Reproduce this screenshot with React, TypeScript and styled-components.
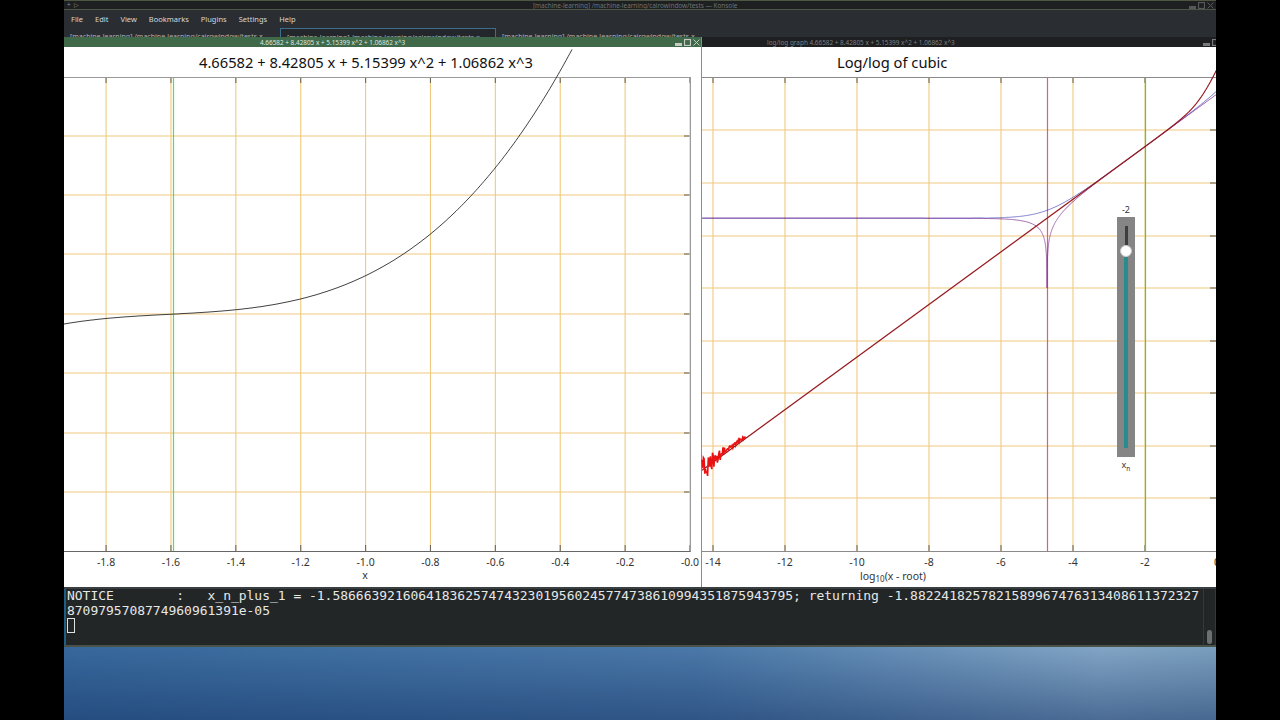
import React from "react";
import styled, { createGlobalStyle } from "styled-components";

const GlobalStyle = createGlobalStyle`
  html, body {
    margin: 0;
    padding: 0;
    background: #000;
    width: 1280px;
    height: 720px;
    overflow: hidden;
  }
`;

const GRID = "#f0ca7e";

const cubic = (x: number): number =>
  4.66582 + 8.42805 * x + 5.15399 * x * x + 1.06862 * x * x * x;

// left plot, in svg coords (svg starts at x=64, y=77)
const leftX = (x: number): number => 626 + x * 324.4;
const leftY = (v: number): number => 237 - v * 118.6;

const cubicPoints = (): string => {
  const pts: string[] = [];
  for (let px = 0; px < 520; px += 2) {
    const x = (px - 626) / 324.4;
    const y = leftY(cubic(x));
    if (y < -30) break;
    pts.push(`${px},${y.toFixed(1)}`);
  }
  return pts.join(" ");
};

// right plot, svg starts at x=702, y=77
const SLOPE = 0.145;
const QUAD = 0.0675;
const CUBE = 1.06862;
const C = 2.75e-6;
const logX = (u: number): number => 515 + u * 36;
const logY = (v: number): number => 72 - 77 - 26.3 * Math.log10(v);

const logPoints = (fn: (h: number) => number, maxY = 600): string => {
  const pts: string[] = [];
  for (let u = -14.3; u <= 0.02; u += 0.002) {
    const h = Math.pow(10, u);
    const y = Math.min(logY(Math.max(fn(h), 1e-30)), maxY);
    pts.push(`${logX(u).toFixed(2)},${y.toFixed(1)}`);
  }
  return pts.join(" ");
};

// rounding noise at the far left of the red curve
const noisePoints = (): string => {
  const pts: string[] = [];
  for (let px = 0; px < 44; px += 0.7) {
    const s = Math.sin(px * 127.1 + 3.7) * 43758.5453;
    const r = s - Math.floor(s) - 0.5;
    const amp = px < 12 ? 24 : px < 24 ? 12 : 4;
    const u = (px - 515) / 36;
    const base = logY(SLOPE * Math.pow(10, u));
    pts.push(`${px.toFixed(1)},${(base - 2 + r * amp).toFixed(1)}`);
  }
  return pts.join(" ");
};

const leftTicks = [-1.8, -1.6, -1.4, -1.2, -1.0, -0.8, -0.6, -0.4, -0.2, -0.0];
const leftRows = [59, 118, 177, 237, 296, 356, 415];
const rightTicks = [-14, -12, -10, -8, -6, -4, -2, 0];
const rightRows = [53, 106, 159, 211, 264, 316, 369, 421];

const menus = ["File", "Edit", "View", "Bookmarks", "Plugins", "Settings", "Help"];
const tabName = "[machine-learning] /machine-learning/cairowindow/tests";

function WinButtons({ color, offset = 0 }: { color: string; offset?: number }): JSX.Element {
  return (
    <ButtonRow $offset={offset}>
      <svg width="7" height="7" viewBox="0 0 7 7">
        <rect x="0" y="4" width="7" height="3" fill={color} />
      </svg>
      <svg width="7" height="7" viewBox="0 0 7 7">
        <rect x="0.5" y="0.5" width="6" height="6" fill="none" stroke={color} strokeWidth="1.2" />
      </svg>
      <svg width="7" height="7" viewBox="0 0 7 7">
        <path d="M0.5 0.5 L6.5 6.5 M6.5 0.5 L0.5 6.5" stroke={color} strokeWidth="1" />
      </svg>
    </ButtonRow>
  );
}

function LeftChart(): JSX.Element {
  return (
    <ChartSvg width="637" height="510" viewBox="0 0 637 510">
      {leftRows.map((y) => (
        <g key={y}>
          <line x1="0" x2="626" y1={y} y2={y} stroke={GRID} strokeWidth="1.1" />
          <line x1="620" x2="626" y1={y} y2={y} stroke="#6d675a" strokeWidth="1.1" />
        </g>
      ))}
      {leftTicks.map((t) => (
        <g key={t}>
          <line x1={leftX(t)} x2={leftX(t)} y1="0" y2="474" stroke={GRID} strokeWidth="1.1" />
          <line x1={leftX(t)} x2={leftX(t)} y1="0" y2="6" stroke="#6d675a" strokeWidth="1.1" />
          <line x1={leftX(t)} x2={leftX(t)} y1="468" y2="474" stroke="#6d675a" strokeWidth="1.1" />
          <TickLabel x={leftX(t)} y="489">
            {t.toFixed(1).replace(/^0\.0$/, "-0.0")}
          </TickLabel>
        </g>
      ))}
      <line x1="109.5" x2="109.5" y1="0" y2="474" stroke="#55dd55" strokeWidth="1.2" />
      <path d="M0 0.5 H626.5 V474.5 H0" fill="none" stroke="#9a9a9a" />
      <path d="M0 474.5 H626.5" stroke="#666" />
      <polyline points={cubicPoints()} fill="none" stroke="#2b2b2b" strokeWidth="0.9" />
      <TickLabel x="301" y="502">x</TickLabel>
    </ChartSvg>
  );
}

function RightChart(): JSX.Element {
  return (
    <ChartSvg width="514" height="510" viewBox="0 0 514 510">
      {rightRows.map((y) => (
        <g key={y}>
          <line x1="0" x2="514" y1={y} y2={y} stroke={GRID} strokeWidth="1.1" />
          <line x1="508" x2="514" y1={y} y2={y} stroke="#6d675a" strokeWidth="1.1" />
        </g>
      ))}
      {rightTicks.map((t) => (
        <g key={t}>
          <line x1={logX(t)} x2={logX(t)} y1="0" y2="474" stroke={GRID} strokeWidth="1.1" />
          <line x1={logX(t)} x2={logX(t)} y1="0" y2="6" stroke="#6d675a" strokeWidth="1.1" />
          <line x1={logX(t)} x2={logX(t)} y1="468" y2="474" stroke="#6d675a" strokeWidth="1.1" />
          <TickLabel x={logX(t)} y="489">{t}</TickLabel>
        </g>
      ))}
      <line x1="345.5" x2="345.5" y1="0" y2="474" stroke="#d9607c" strokeWidth="1.2" />
      <line x1="443.5" x2="443.5" y1="0" y2="474" stroke="#4fcc4f" strokeWidth="1.2" />
      <path d="M0 0.5 H514 M0 474.5 H514" fill="none" stroke="#8a8a8a" />
      <polyline points={logPoints((h) => SLOPE * h + 0.048 * h * h + C)} fill="none" stroke="#4a4ab8" strokeWidth="0.7" />
      <polyline points={logPoints((h) => Math.abs(SLOPE * h - C), 211)} fill="none" stroke="#7b2c90" strokeWidth="0.7" />
      <polyline points={logPoints((h) => SLOPE * h + QUAD * h * h + CUBE * h * h * h)} fill="none" stroke="#961a1f" strokeWidth="1.1" />
      <polyline points={noisePoints()} fill="none" stroke="#e81212" strokeWidth="1.6" />
      <TickLabel x="191" y="503">
        log<tspan fontSize="8" dy="2">10</tspan>
        <tspan dy="-2">(x - root)</tspan>
      </TickLabel>
    </ChartSvg>
  );
}

function App(): JSX.Element {
  return (
    <Page>
      <GlobalStyle />
      <Screen>
        <KonsoleTitle>
          <TitleIcons>
            <span>+</span>
            <span>▷</span>
          </TitleIcons>
          <KonsoleText>{tabName} — Konsole</KonsoleText>
          <WinButtons color="#55595b" offset={2} />
        </KonsoleTitle>
        <MenuBar>
          {menus.map((m) => (
            <MenuItem key={m}>{m}</MenuItem>
          ))}
        </MenuBar>
        <TabBar>
          <Tab>{tabName} ×</Tab>
          <Tab $active>{tabName} ×</Tab>
          <Tab>{tabName} ×</Tab>
        </TabBar>
        <Plots>
          <PlotWindow $width={637}>
            <WindowBar $active $pad={196}>
              <WindowText $active>4.66582 + 8.42805 x + 5.15399 x^2 + 1.06862 x^3</WindowText>
              <WinButtons color="#c4ccc4" offset={1} />
            </WindowBar>
            <PlotBody>
              <PlotTitle $pad={135}>4.66582 + 8.42805 x + 5.15399 x^2 + 1.06862 x^3</PlotTitle>
              <LeftChart />
            </PlotBody>
          </PlotWindow>
          <PlotWindow $width={515} $divider>
            <WindowBar $pad={65}>
              <WindowText>log/log graph 4.66582 + 8.42805 x + 5.15399 x^2 + 1.06862 x^3</WindowText>
              <WinButtons color="#777a7b" offset={-12} />
            </WindowBar>
            <PlotBody>
              <PlotTitle $pad={135}>Log/log of cubic</PlotTitle>
              <RightChart />
              <Slider>
                <SliderLabel>-2</SliderLabel>
                <SliderBox>
                  <SliderRest />
                  <SliderKnob />
                  <SliderFill />
                </SliderBox>
                <SliderLabel>
                  x<sub>n</sub>
                </SliderLabel>
              </Slider>
            </PlotBody>
          </PlotWindow>
        </Plots>
        <Terminal>
          <TerminalText>
            <TermLine>NOTICE        :   x_n_plus_1 = -1.58666392160641836257474323019560245774738610994351875943795; returning -1.8822418257821589967476313408611372327</TermLine>
            <TermLine>8709795708774960961391e-05</TermLine>
            <Cursor />
          </TerminalText>
          <ScrollTrack>
            <ScrollThumb />
          </ScrollTrack>
        </Terminal>
        <Wallpaper />
      </Screen>
    </Page>
  );
}

const Page = styled.div`
  width: 1280px;
  height: 720px;
  background: #000;
  display: flex;
  justify-content: center;
`;

const Screen = styled.div`
  width: 1152px;
  height: 720px;
  display: flex;
  flex-direction: column;
  overflow: hidden;
  font-family: "Noto Sans", sans-serif;
`;

const KonsoleTitle = styled.div`
  height: 10px;
  flex: none;
  box-sizing: border-box;
  background: #1d1f21;
  border-top: 1px solid #4c5642;
  border-bottom: 1px solid #4c5642;
  display: flex;
  align-items: center;
  color: #6f7375;
  font-size: 6.4px;
  overflow: hidden;
`;

const TitleIcons = styled.div`
  width: 469px;
  flex: none;
  display: flex;
  gap: 3px;
  padding-left: 3px;
  box-sizing: border-box;
  color: #8a8f90;
  line-height: 8px;
`;

const KonsoleText = styled.span`
  flex: 1;
  white-space: nowrap;
`;

const ButtonRow = styled.div<{ $offset: number }>`
  display: flex;
  gap: 2px;
  align-items: center;
  flex: none;
  margin-right: ${(p) => p.$offset}px;
`;

const MenuBar = styled.div`
  height: 18px;
  flex: none;
  background: #2a2e32;
  display: flex;
  align-items: center;
  gap: 12px;
  padding-left: 7px;
  color: #d6d8d8;
  font-size: 7.5px;
`;

const MenuItem = styled.span`
  white-space: nowrap;
`;

const TabBar = styled.div`
  height: 9px;
  flex: none;
  background: #2a2e32;
  box-sizing: border-box;
  display: flex;
  overflow: hidden;
`;

const Tab = styled.div<{ $active?: boolean }>`
  width: 216px;
  flex: none;
  box-sizing: border-box;
  padding: 4px 0 0 6px;
  color: #aeb2b4;
  font-size: 7px;
  line-height: 9px;
  white-space: nowrap;
  overflow: hidden;
  background: ${(p) => (p.$active ? "#23262a" : "transparent")};
  border-left: ${(p) => (p.$active ? "1px solid #3c6f8f" : "none")};
  border-right: ${(p) => (p.$active ? "1px solid #3c6f8f" : "none")};
  border-top: ${(p) => (p.$active ? "1px solid #3c6f8f" : "none")};
`;

const Plots = styled.div`
  height: 550px;
  flex: none;
  display: flex;
`;

const PlotWindow = styled.div<{ $width: number; $divider?: boolean }>`
  width: ${(p) => p.$width}px;
  flex: none;
  display: flex;
  flex-direction: column;
  box-sizing: border-box;
  border-left: ${(p) => (p.$divider ? "1px solid #8c8c8c" : "none")};
`;

const WindowBar = styled.div<{ $active?: boolean; $pad: number }>`
  height: 10px;
  flex: none;
  display: flex;
  align-items: center;
  justify-content: space-between;
  padding-left: ${(p) => p.$pad}px;
  background: ${(p) => (p.$active ? "#40694a" : "#1e1f20")};
  overflow: hidden;
`;

const WindowText = styled.span<{ $active?: boolean }>`
  font-size: 6.4px;
  white-space: nowrap;
  color: ${(p) => (p.$active ? "#dfe6df" : "#7c7f80")};
`;

const PlotBody = styled.div`
  position: relative;
  flex: 1;
  background: #fff;
  display: flex;
  flex-direction: column;
`;

const PlotTitle = styled.div<{ $pad: number }>`
  height: 30px;
  flex: none;
  padding-left: ${(p) => p.$pad}px;
  font-size: 14.7px;
  line-height: 30px;
  color: #111;
  white-space: nowrap;
`;

const ChartSvg = styled.svg`
  display: block;
  flex: none;
  overflow: visible;
`;

const TickLabel = styled.text`
  font-family: "Noto Sans", sans-serif;
  font-size: 10.5px;
  fill: #333;
  text-anchor: middle;
`;

const Slider = styled.div`
  position: absolute;
  left: 415px;
  top: 155px;
  width: 18px;
  display: flex;
  flex-direction: column;
  align-items: center;
`;

const SliderLabel = styled.div`
  height: 15px;
  line-height: 15px;
  font-size: 9px;
  color: #333;
  white-space: nowrap;

  sub {
    font-size: 6.5px;
  }
`;

const SliderBox = styled.div`
  width: 18px;
  height: 240px;
  flex: none;
  box-sizing: border-box;
  padding: 9px 0;
  background: #858585;
  display: flex;
  flex-direction: column;
  align-items: center;
`;

const SliderRest = styled.div`
  width: 3px;
  height: 19px;
  flex: none;
  background: #3d3d3d;
`;

const SliderKnob = styled.div`
  width: 12px;
  height: 12px;
  flex: none;
  box-sizing: border-box;
  border-radius: 50%;
  background: #fff;
  border: 1px solid #c8c8c8;
`;

const SliderFill = styled.div`
  width: 4px;
  flex: 1;
  background: #2a8b8f;
`;

const Terminal = styled.div`
  height: 60px;
  flex: none;
  box-sizing: border-box;
  background: #232627;
  border-top: 2px solid #3a3f41;
  border-bottom: 2px solid #4a5248;
  display: flex;
`;

const TerminalText = styled.div`
  flex: 1;
  box-sizing: border-box;
  padding: 0 0 0 1px;
  border-left: 2px solid #1f5f85;
  font-family: "DejaVu Sans Mono", monospace;
  font-size: 13px;
  letter-spacing: -0.02px;
  line-height: 15px;
  color: #e6e8e8;
  min-width: 0;
  overflow: hidden;
`;

const TermLine = styled.div`
  white-space: pre;
  position: relative;
  top: -1px;
`;

const Cursor = styled.div`
  width: 8px;
  height: 15px;
  box-sizing: border-box;
  border: 1px solid #dfe2e2;
  position: relative;
  top: -1px;
`;

const ScrollTrack = styled.div`
  width: 13px;
  flex: none;
  box-sizing: border-box;
  border-left: 1px solid #33383a;
  border-right: 1px solid #33383a;
  display: flex;
  align-items: flex-end;
  justify-content: center;
  padding-bottom: 1px;
`;

const ScrollThumb = styled.div`
  width: 5px;
  height: 14px;
  border-radius: 3px;
  background: #6b7072;
`;

const Wallpaper = styled.div`
  flex: 1;
  background:
    linear-gradient(180deg, rgba(20, 50, 100, 0) 0%, rgba(20, 50, 100, 0.5) 100%),
    linear-gradient(90deg, #37689c 0%, #4a78a8 55%, #82a5c5 90%, #7a9ebd 100%);
`;

export default App;
